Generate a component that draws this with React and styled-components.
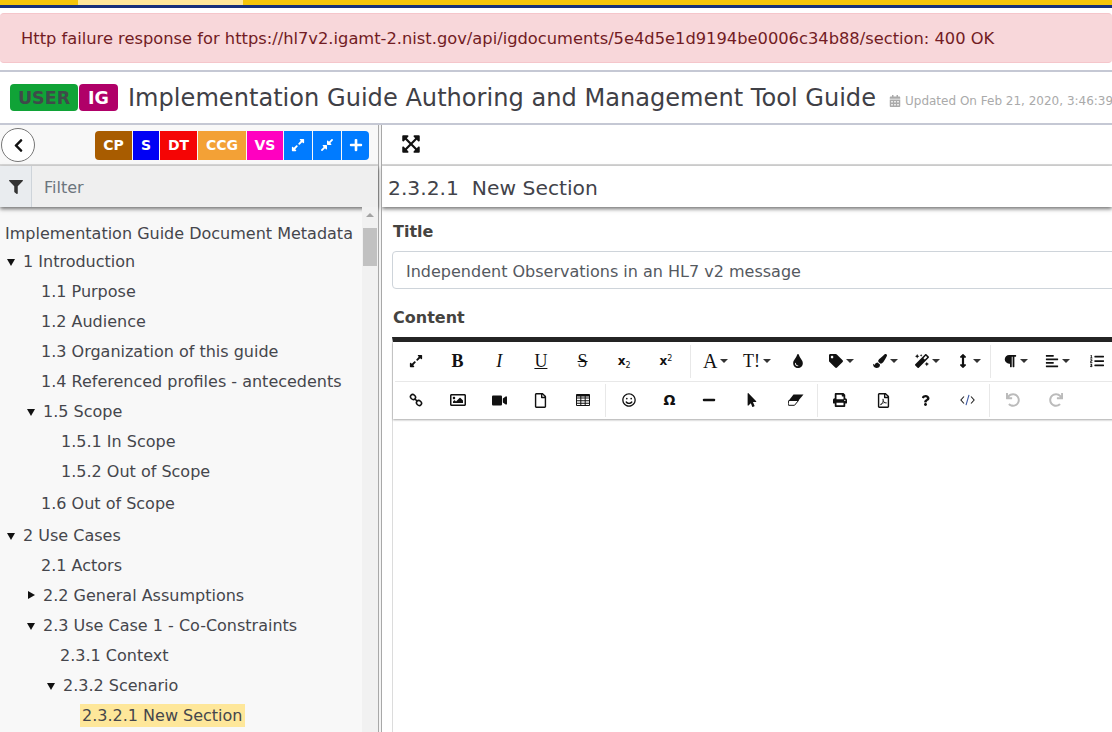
import React from 'react';
import styled, { createGlobalStyle } from 'styled-components';
import {
  FaChevronLeft, FaFilter, FaExpandArrowsAlt, FaTint, FaTag, FaPaintBrush, FaMagic,
  FaArrowsAltV, FaParagraph, FaAlignLeft, FaListOl, FaRegImage, FaVideo, FaRegFile,
  FaRegSmile, FaMinus, FaMousePointer, FaPrint, FaRegFilePdf, FaQuestion,
  FaUndo, FaRedo, FaPlus, FaCalendarAlt, FaExpandAlt, FaCompressAlt,
} from 'react-icons/fa';

const Global = createGlobalStyle`
  html, body { margin: 0; padding: 0; height: 732px; overflow: hidden; background: #fff; }
  body { font-family: "DejaVu Sans", Verdana, sans-serif; color: #3f3f46; }
  * { box-sizing: border-box; }
`;

const TopBar = styled.div`
  height: 8px;
  display: flex;
  background: #f5c50a;
  border-bottom: 3px solid #16307a;
`;
const TopTab = styled.div`
  width: 165px;
  margin-left: 78px;
  background: #fee79a;
`;
const Alert = styled.div`
  height: 50px;
  margin-top: 5px;
  padding: 1px 0 0 21px;
  display: flex;
  align-items: center;
  background: #f8d7da;
  border: 1px solid #f5c6cb;
  border-left: 0;
  border-right: 0;
  border-radius: 4px;
  color: #721c24;
  font-size: 16.3px;
  white-space: nowrap;
`;
const Header = styled.div`
  height: 55px;
  margin-top: 7px;
  padding-left: 10px;
  display: flex;
  align-items: center;
  border-top: 2px solid #c5c8d4;
  border-bottom: 2px solid #c5c8d4;
  white-space: nowrap;
  overflow: hidden;
`;
const Badge = styled.span`
  width: ${p => p.$w}px;
  height: 27px;
  flex: none;
  margin-right: 1px;
  display: inline-flex;
  align-items: center;
  justify-content: center;
  border-radius: 4px;
  background: ${p => p.$bg};
  color: ${p => p.$fg};
  font-size: 17.5px;
  font-weight: 700;
`;
const DocTitle = styled.h1`
  margin: 0 0 0 9px;
  flex: none;
  font-size: 24.1px;
  font-weight: 400;
  color: #3f4046;
`;
const Updated = styled.small`
  margin: 6px 0 0 13px;
  flex: none;
  display: inline-flex;
  align-items: center;
  gap: 4px;
  font-size: 12px;
  font-weight: 400;
  color: #aaa;
`;
const Body = styled.div`
  height: 607px;
  display: flex;
  overflow: hidden;
`;
const Side = styled.aside`
  width: 378px;
  flex: none;
  display: flex;
  flex-direction: column;
  background: #f8f8f8;
`;
const SideTools = styled.div`
  height: 41px;
  flex: none;
  padding: 1px 9px 0 1px;
  display: flex;
  align-items: center;
  justify-content: space-between;
  border-bottom: 2px solid #d8d8d8;
`;
const BackBtn = styled.button`
  width: 34px;
  height: 34px;
  padding: 0;
  display: flex;
  align-items: center;
  justify-content: center;
  border: 1px solid #777;
  border-radius: 50%;
  background: #fff;
  color: #111;
  font-size: 15px;
`;
const Chips = styled.div`
  display: flex;
  gap: 1px;
  border-radius: 4px;
  overflow: hidden;
`;
const Chip = styled.span`
  width: ${p => p.$w}px;
  height: 29px;
  display: flex;
  align-items: center;
  justify-content: center;
  background: ${p => p.$bg};
  color: #fff;
  font-size: 14px;
  font-weight: 700;
`;
const FilterRow = styled.div`
  height: 41px;
  flex: none;
  display: flex;
  background: #efefef;
  box-shadow: 0 2px 4px rgba(0, 0, 0, 0.55);
  position: relative;
`;
const FilterIcon = styled.div`
  width: 32px;
  display: flex;
  align-items: center;
  justify-content: center;
  background: #e9ecef;
  border-right: 1px solid #ced4da;
  color: #333;
  font-size: 14px;
`;
const FilterInput = styled.div`
  padding: 1px 0 0 12px;
  display: flex;
  align-items: center;
  color: #6c757d;
  font-size: 16px;
`;
const TreeWrap = styled.div`
  flex: 1;
  min-height: 0;
  display: flex;
`;
const Tree = styled.div`
  flex: 1;
  min-width: 0;
  padding-top: 13px;
  overflow: hidden;
  white-space: nowrap;
`;
const Row = styled.div`
  height: ${p => p.$h ?? 30}px;
  padding-left: ${p => p.$indent}px;
  display: flex;
  align-items: center;
  font-size: 16px;
  color: #45464c;
`;
const Caret = styled.span`
  width: 0;
  height: 0;
  margin-right: 8px;
  ${p => p.$open
    ? `border-left: 4px solid transparent; border-right: 4px solid transparent; border-top: 7px solid #111; margin-top: 2px;`
    : `border-top: 4px solid transparent; border-bottom: 4px solid transparent; border-left: 7px solid #111; margin-left: 1px;`}
`;
const Active = styled.span`
  padding: 0 2px;
  height: 23px;
  display: flex;
  align-items: center;
  background: #fee79a;
`;
const Track = styled.div`
  width: 16px;
  flex: none;
  padding-top: 21px;
  background: #f1f1f1;
  position: relative;
`;
const UpArrow = styled.span`
  position: absolute;
  top: 6px;
  left: 4px;
  border-left: 4px solid transparent;
  border-right: 4px solid transparent;
  border-bottom: 4px solid #a3a3a3;
`;
const Thumb = styled.div`
  height: 38px;
  margin: 0 1px;
  background: #c1c1c1;
`;
const Splitter = styled.div`
  width: 4px;
  flex: none;
  background: #f4f4f4;
  border-left: 1px solid #a8a8a8;
  border-right: 1px solid #a8a8a8;
`;
const Main = styled.main`
  flex: 1;
  min-width: 0;
  display: flex;
  flex-direction: column;
  overflow: hidden;
`;
const MainTools = styled.div`
  height: 41px;
  flex: none;
  padding: 0 0 1px 19px;
  display: flex;
  align-items: center;
  border-bottom: 2px solid #d8d8d8;
  color: #111;
  font-size: 20px;
`;
const SectionTitle = styled.div`
  height: 41px;
  flex: none;
  padding: 2px 0 0 6px;
  display: flex;
  align-items: center;
  box-shadow: 0 2px 4px rgba(0, 0, 0, 0.55);
  font-size: 20.3px;
  color: #42434a;
  white-space: pre;
  position: relative;
`;
const Form = styled.div`
  flex: 1;
  width: 760px;
  padding: 15px 0 0 10px;
`;
const Label = styled.div`
  height: 20px;
  margin-bottom: 9px;
  padding-left: 1px;
  font-size: 16px;
  font-weight: 700;
  color: #45433f;
`;
const TextInput = styled.div`
  height: 38px;
  margin-bottom: 19px;
  padding: 2px 0 0 13px;
  display: flex;
  align-items: center;
  border: 1px solid #ced4da;
  border-radius: 4px;
  font-size: 16px;
  color: #55595f;
  white-space: nowrap;
`;
const Editor = styled.div`
  height: 400px;
  border-top: 5px solid #242424;
  border-left: 1px solid #dcdcdc;
`;
const Toolbar = styled.div`
  height: 77px;
  padding: 0 2px;
  box-shadow: 0 1px 2px rgba(0, 0, 0, 0.35);
`;
const ToolRow = styled.div`
  height: 38.5px;
  display: flex;
  align-items: center;
  & + & { border-top: 1px solid #e8e8e8; }
`;
const Sep = styled.span`
  width: 1px;
  height: 33px;
  flex: none;
  margin: 0 ${p => p.$r ?? 0}px 0 ${p => p.$l ?? 0}px;
  background: #e8e8e8;
`;
const Tool = styled.span`
  width: ${p => p.$w ?? 41.7}px;
  flex: none;
  display: flex;
  align-items: center;
  justify-content: center;
  gap: 3px;
  color: ${p => p.$muted ? '#bbb' : '#111'};
  font-size: ${p => p.$size ?? 14}px;
`;
const Glyph = styled.span`
  font-family: ${p => p.$sans ? '"DejaVu Sans"' : '"Liberation Serif"'}, serif;
  font-size: ${p => p.$size ?? 18}px;
  font-weight: ${p => p.$weight ?? 700};
  font-style: ${p => p.$italic ? 'italic' : 'normal'};
  text-decoration: ${p => p.$deco ?? 'none'};
  line-height: 1;
`;
const Small = styled.span`
  font-size: 8px;
  font-weight: 400;
  position: relative;
  top: ${p => p.$up ? -4 : 3}px;
`;
const DropArrow = styled.span`
  border-left: 4px solid transparent;
  border-right: 4px solid transparent;
  border-top: 4px solid #333;
`;

const ChainIcon = () => (
  <svg width="14" height="14" viewBox="0 0 14 14" fill="none" stroke="#111" strokeWidth="1.6">
    <ellipse cx="4" cy="4" rx="2.6" ry="2.3" transform="rotate(40 4 4)" />
    <ellipse cx="10" cy="10" rx="2.6" ry="2.3" transform="rotate(40 10 10)" />
    <path d="M6 6l2 2" />
  </svg>
);
const GridIcon = () => (
  <svg width="14" height="12" viewBox="0 0 14 12" fill="none" stroke="#111" strokeWidth="1">
    <path d="M.5.5h13v11H.5zM.5 4h13M.5 6.75h13M.5 9.25h13M4.8.5v11M9.2.5v11" />
    <path d="M.5 1.5h13" strokeWidth="2" />
  </svg>
);
const EraserIcon = () => (
  <svg width="16" height="12" viewBox="0 0 16 12">
    <path d="M5.5.5H15.5L10.5 6.5H.8z" fill="#111" />
    <path d="M.8 6.5H10.5L6.5 11.3H.6L.1 10z" fill="#fff" stroke="#111" strokeWidth="1" />
  </svg>
);
const CodeIcon = () => (
  <svg width="15" height="12" viewBox="0 0 15 12" fill="none" stroke="#222" strokeWidth="1.1">
    <path d="M4 2.5L.9 6 4 9.5M11 2.5L14.1 6 11 9.5" />
    <path d="M9 .8L6 11.2" stroke="#3a55a0" />
  </svg>
);

const treeRows = [
  { t: 'Implementation Guide Document Metadata', i: 5, h: 26 },
  { t: '1 Introduction', i: 7, c: 'open' },
  { t: '1.1 Purpose', i: 41 },
  { t: '1.2 Audience', i: 41 },
  { t: '1.3 Organization of this guide', i: 41 },
  { t: '1.4 Referenced profiles - antecedents', i: 41 },
  { t: '1.5 Scope', i: 27, c: 'open' },
  { t: '1.5.1 In Scope', i: 61 },
  { t: '1.5.2 Out of Scope', i: 61, h: 31 },
  { t: '1.6 Out of Scope', i: 41, h: 32 },
  { t: '2 Use Cases', i: 7, c: 'open', h: 32 },
  { t: '2.1 Actors', i: 41, h: 29 },
  { t: '2.2 General Assumptions', i: 27, c: 'closed' },
  { t: '2.3 Use Case 1 - Co-Constraints', i: 27, c: 'open' },
  { t: '2.3.1 Context', i: 60 },
  { t: '2.3.2 Scenario', i: 47, c: 'open' },
  { t: '2.3.2.1 New Section', i: 80, active: true },
];

const withArrow = (node) => <>{node}<DropArrow /></>;

const App = () => (
  <>
    <Global />
    <TopBar><TopTab /></TopBar>
    <Alert>Http failure response for https://hl7v2.igamt-2.nist.gov/api/igdocuments/5e4d5e1d9194be0006c34b88/section: 400 OK</Alert>
    <Header>
      <Badge $w={68} $bg="#10a337" $fg="#3f4a4a">USER</Badge>
      <Badge $w={39} $bg="#b00068" $fg="#fff">IG</Badge>
      <DocTitle>Implementation Guide Authoring and Management Tool Guide</DocTitle>
      <Updated><FaCalendarAlt />Updated On Feb 21, 2020, 3:46:39</Updated>
    </Header>
    <Body>
      <Side>
        <SideTools>
          <BackBtn><FaChevronLeft /></BackBtn>
          <Chips>
            <Chip $w={37} $bg="#a85c00">CP</Chip>
            <Chip $w={26} $bg="#0000f5">S</Chip>
            <Chip $w={37} $bg="#f50505">DT</Chip>
            <Chip $w={48} $bg="#f3a136">CCG</Chip>
            <Chip $w={36} $bg="#ff00c0">VS</Chip>
            <Chip $w={28} $bg="#007bff"><FaExpandAlt /></Chip>
            <Chip $w={28} $bg="#007bff"><FaCompressAlt /></Chip>
            <Chip $w={27} $bg="#007bff"><FaPlus /></Chip>
          </Chips>
        </SideTools>
        <FilterRow>
          <FilterIcon><FaFilter /></FilterIcon>
          <FilterInput>Filter</FilterInput>
        </FilterRow>
        <TreeWrap>
          <Tree>
            {treeRows.map(r => (
              <Row key={r.t} $indent={r.i} $h={r.h}>
                {r.c && <Caret $open={r.c === 'open'} />}
                {r.active ? <Active>{r.t}</Active> : r.t}
              </Row>
            ))}
          </Tree>
          <Track><UpArrow /><Thumb /></Track>
        </TreeWrap>
      </Side>
      <Splitter />
      <Main>
        <MainTools><FaExpandArrowsAlt /></MainTools>
        <SectionTitle>2.3.2.1  New Section</SectionTitle>
        <Form>
          <Label>Title</Label>
          <TextInput>Independent Observations in an HL7 v2 message</TextInput>
          <Label>Content</Label>
          <Editor>
            <Toolbar>
              <ToolRow>
                <Tool><FaExpandAlt /></Tool>
                <Tool><Glyph>B</Glyph></Tool>
                <Tool><Glyph $italic $weight={400}>I</Glyph></Tool>
                <Tool><Glyph $weight={400} $deco="underline">U</Glyph></Tool>
                <Tool><Glyph $weight={400} $deco="line-through">S</Glyph></Tool>
                <Tool><Glyph $sans $size={12}>x<Small>2</Small></Glyph></Tool>
                <Tool><Glyph $sans $size={12}>x<Small $up>2</Small></Glyph></Tool>
                <Sep $l={3} $r={4} />
                <Tool>{withArrow(<Glyph $size={20} $weight={400}>A</Glyph>)}</Tool>
                <Tool $w={41}>{withArrow(<Glyph $weight={400}>T!</Glyph>)}</Tool>
                <Tool $w={41}><FaTint /></Tool>
                <Tool $w={46}>{withArrow(<FaTag />)}</Tool>
                <Tool>{withArrow(<FaPaintBrush />)}</Tool>
                <Tool>{withArrow(<FaMagic />)}</Tool>
                <Tool>{withArrow(<FaArrowsAltV />)}</Tool>
                <Sep $r={4} />
                <Tool>{withArrow(<FaParagraph />)}</Tool>
                <Tool>{withArrow(<FaAlignLeft />)}</Tool>
                <Tool $w={38}><FaListOl /></Tool>
              </ToolRow>
              <ToolRow>
                <Tool><ChainIcon /></Tool>
                <Tool $size={16}><FaRegImage /></Tool>
                <Tool $size={15}><FaVideo /></Tool>
                <Tool $size={15}><FaRegFile /></Tool>
                <Tool><GridIcon /></Tool>
                <Sep $l={2} $r={2} />
                <Tool $w={41}><FaRegSmile /></Tool>
                <Tool $w={40}><Glyph $size={14} $sans>Ω</Glyph></Tool>
                <Tool $w={40}><FaMinus /></Tool>
                <Tool $w={45}><FaMousePointer /></Tool>
                <Tool $w={43}><EraserIcon /></Tool>
                <Sep />
                <Tool $w={44}><FaPrint /></Tool>
                <Tool $w={42} $size={15}><FaRegFilePdf /></Tool>
                <Tool $w={42} $size={11}><FaQuestion /></Tool>
                <Tool $w={42}><CodeIcon /></Tool>
                <Sep $l={1} />
                <Tool $w={46} $muted><FaUndo /></Tool>
                <Tool $w={40} $muted><FaRedo /></Tool>
              </ToolRow>
            </Toolbar>
          </Editor>
        </Form>
      </Main>
    </Body>
  </>
);

export default App;
